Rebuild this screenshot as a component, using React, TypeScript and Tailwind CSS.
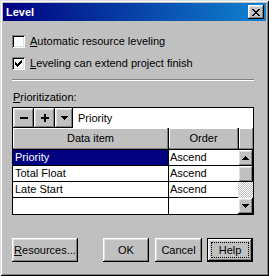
import React from "react";

const Pix = ({ rows, color = "#000000" }: { rows: string[]; color?: string }) => (
  <svg width={rows[0].length} height={rows.length} shapeRendering="crispEdges" className="block">
    {rows.flatMap((r, y) =>
      r.split("").map((c, x) =>
        c === "x" ? <rect key={`${x}-${y}`} x={x} y={y} width={1} height={1} fill={color} /> : null
      )
    )}
  </svg>
);

const RAISED =
  "bg-[#c0c0c0] shadow-[inset_-1px_-1px_#000000,inset_1px_1px_#ffffff,inset_-2px_-2px_#808080,inset_2px_2px_#dfdfdf]";
const HEADER =
  "bg-[#c0c0c0] shadow-[inset_-1px_-1px_#808080,inset_1px_1px_#ffffff]";
const SUNKEN =
  "bg-white shadow-[inset_1px_1px_#808080,inset_-1px_-1px_#ffffff,inset_2px_2px_#000000,inset_-2px_-2px_#dfdfdf]";

const X_GLYPH = ["xx....xx", ".xx..xx.", "..xxxx..", "...xx...", "..xxxx..", ".xx..xx.", "xx....xx"];
const CHECK = ["......x", ".....xx", "x...xxx", "xx.xxx.", "xxxxx..", ".xxx...", "..x...."];
const UP = ["...x...", "..xxx..", ".xxxxx.", "xxxxxxx"];
const DOWN = ["xxxxxxx", ".xxxxx.", "..xxx..", "...x..."];
const SMALLDOWN = ["xxxxxxx", ".xxxxx.", "..xxx..", "...x..."];
const MINUS = ["xxxxxxxx", "xxxxxxxx"];
const PLUS = [
  "...xx...",
  "...xx...",
  "...xx...",
  "xxxxxxxx",
  "xxxxxxxx",
  "...xx...",
  "...xx...",
  "...xx...",
];

function Check({ checked, children }: { checked: boolean; children: React.ReactNode }) {
  return (
    <div className="flex items-center h-[13px]">
      <div className={`w-[13px] h-[13px] ${SUNKEN} flex items-center justify-center`}>
        {checked && <Pix rows={CHECK} />}
      </div>
      <span className="ml-[5px] whitespace-nowrap">{children}</span>
    </div>
  );
}

const rows = [
  { item: "Priority", order: "Ascend", selected: true },
  { item: "Total Float", order: "Ascend" },
  { item: "Late Start", order: "Ascend" },
  { item: "", order: "" },
];

export default function App() {
  return (
    <div className="w-[269px] h-[276px] bg-[#c0c0c0] shadow-[inset_1px_1px_#dfdfdf,inset_-1px_-1px_#000000,inset_2px_2px_#ffffff,inset_-2px_-2px_#808080] flex flex-col font-['Liberation_Sans',Arial,sans-serif] text-[11px] leading-[13px] text-black select-none">
      {/* Title bar */}
      <div className="mx-[3px] mt-[3px] h-[18px] flex items-center justify-between pl-[3px] pr-[2px] bg-[linear-gradient(to_right,#000080,#1084d0)]">
        <span className="text-white font-bold text-[11px]">Level</span>
        <div className={`w-[16px] h-[14px] ${RAISED} flex items-center justify-center`}>
          <Pix rows={X_GLYPH} />
        </div>
      </div>

      {/* Body */}
      <div className="flex flex-col pl-[12px] pr-[15px]">
        <div className="mt-[14px]">
          <Check checked={false}>
            <span className="underline">A</span>utomatic resource leveling
          </Check>
        </div>
        <div className="mt-[9px]">
          <Check checked={true}>
            <span className="underline">L</span>eveling can extend project finish
          </Check>
        </div>
        <div className="mt-[9px] h-[2px] border-t border-t-[#808080] border-b border-b-white" />
        <div className="mt-[10px] pl-[1px] h-[13px]">
          <span className="underline">P</span>rioritization:
        </div>

        {/* Grid */}
        <div className="mt-[3px] border border-black flex flex-col">
          {/* toolbar */}
          <div className="h-[20px] flex">
            <div className={`w-[21px] h-[20px] ${RAISED} flex items-center justify-center`}>
              <Pix rows={MINUS} />
            </div>
            <div className={`w-[21px] h-[20px] ${RAISED} flex items-center justify-center`}>
              <Pix rows={PLUS} />
            </div>
            <div className={`w-[18px] h-[20px] ${RAISED} flex items-center justify-center`}>
              <Pix rows={SMALLDOWN} />
            </div>
            <div className="flex-1 bg-white flex items-center pl-[5px]">Priority</div>
          </div>
          {/* header */}
          <div className="h-[22px] flex border-b border-black">
            <div className={`w-[156px] border-r border-black`}>
              <div className={`h-full ${HEADER} flex items-center justify-center`}>Data item</div>
            </div>
            <div className={`w-[70px] border-r border-black`}>
              <div className={`h-full ${HEADER} flex items-center justify-center`}>Order</div>
            </div>
            <div className={`flex-1 ${HEADER}`} />
          </div>
          {/* rows + scrollbar */}
          <div className="flex h-[64px]">
            <div className="w-[225px] flex flex-col bg-white">
              {rows.map((r, i) => (
                <div
                  key={i}
                  className={`h-[16px] flex ${i < rows.length - 1 ? "border-b border-black" : ""}`}
                >
                  <div
                    className={`w-[156px] border-r border-black pl-[2px] flex items-center ${
                      r.selected ? "bg-[#000080] text-white" : "bg-white"
                    }`}
                  >
                    {r.item}
                  </div>
                  <div className="flex-1 pl-[1px] flex items-center bg-white">{r.order}</div>
                </div>
              ))}
            </div>
            <div className="flex-1 flex flex-col">
              <div className={`h-[16px] ${RAISED} flex items-center justify-center`}>
                <Pix rows={UP} />
              </div>
              <div className={`h-[16px] ${RAISED}`} />
              <div className="flex-1 bg-[image:repeating-conic-gradient(#c0c0c0_0%_25%,#ffffff_0%_50%)] bg-[length:2px_2px]" />
              <div className={`h-[16px] ${RAISED} flex items-center justify-center`}>
                <Pix rows={DOWN} />
              </div>
            </div>
          </div>
        </div>

        {/* Buttons */}
        <div className="mt-[23px] h-[24px] flex">
          <div className={`w-[66px] h-[24px] ${RAISED} flex items-center justify-center`}>
            <span>
              <span className="underline">R</span>esources...
            </span>
          </div>
          <div className={`ml-[25px] w-[46px] h-[24px] ${RAISED} flex items-center justify-center`}>OK</div>
          <div className={`ml-[6px] w-[47px] h-[24px] ${RAISED} flex items-center justify-center`}>Cancel</div>
          <div className="ml-[5px] w-[46px] h-[24px] border border-black">
            <div className={`h-full ${RAISED} p-[3px] flex`}>
              <div className="flex-1 border border-dotted border-black flex items-center justify-center">Help</div>
            </div>
          </div>
        </div>
      </div>
    </div>
  );
}
